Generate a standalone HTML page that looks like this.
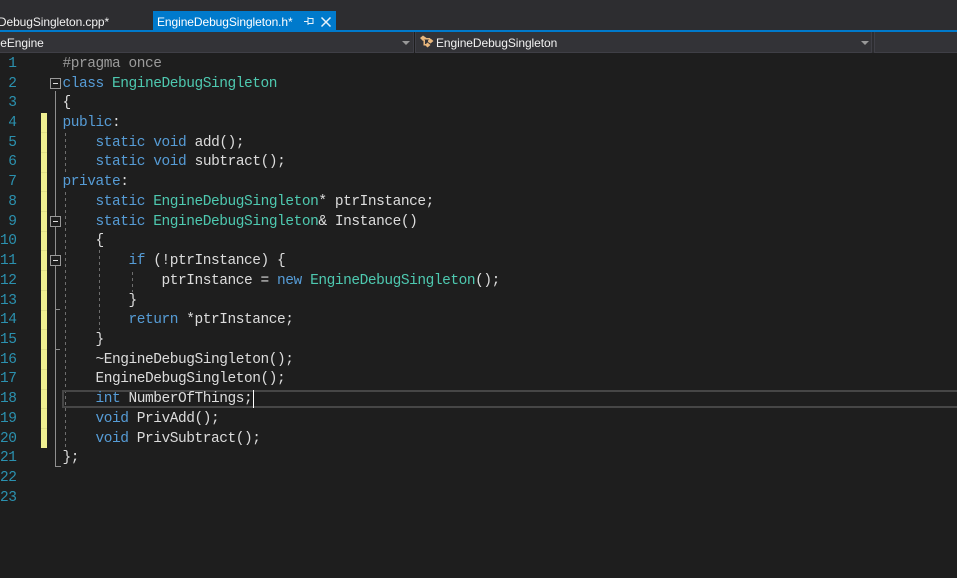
<!DOCTYPE html>
<html><head><meta charset="utf-8"><style>
html,body{margin:0;padding:0;background:#1e1e1e}
#r{position:relative;width:957px;height:578px;overflow:hidden;background:#1e1e1e}
.a{position:absolute}
.l,.n{position:absolute;white-space:pre;font-family:"Liberation Mono",monospace;font-size:14.5px;letter-spacing:-0.45px;line-height:20px;color:#dcdcdc;margin-top:1px}
.l{left:62.5px}
.n{left:0;width:16.5px;text-align:right;color:#2b91af;overflow:visible}
.k{color:#569cd6}.c{color:#4ec9b0}.p{color:#9b9b9b}
.u{position:absolute;font-family:"Liberation Sans",sans-serif;font-size:12px;letter-spacing:-0.08px;line-height:16px;white-space:nowrap;color:#f1f1f1}
.g{position:absolute;width:1px;background:repeating-linear-gradient(#6e6e6e 0 3px,transparent 3px 6px)}
.f{position:absolute;left:50px;width:9px;height:9px;border:1px solid #999;box-sizing:content-box}
.f:after{content:"";position:absolute;left:2px;top:4px;width:5px;height:1px;background:#ddd}
.s{position:absolute;left:41px;width:5.5px;height:1px;background:#dfdf87}
</style></head><body><div id="r">
<div class="a" style="left:0;top:0;width:957px;height:32px;background:#2d2d30"></div>
<div class="a" style="left:153px;top:11px;width:183px;height:19px;background:#007acc"></div>
<div class="a" style="left:0;top:30px;width:957px;height:2px;background:#007acc"></div>
<div class="u" style="left:-39px;top:14px">EngineDebugSingleton.cpp*</div>
<div class="u" style="left:157px;top:14px;color:#fff">EngineDebugSingleton.h*</div>
<svg class="a" style="left:300px;top:15px" width="36" height="14" viewBox="0 0 36 14" fill="none" stroke="#e8f3fb" stroke-width="1"><path d="M4 6.5H8M8 3.5H13V8.5H8ZM8 2V10"/><path d="M21.5 2.5L30.5 11.5M30.5 2.5L21.5 11.5" stroke-width="1.5"/></svg>

<div class="a" style="left:0;top:32px;width:414px;height:21px;background:#333337;border-right:1px solid #3f3f46;border-bottom:1px solid #3f3f46;box-sizing:border-box"></div>
<div class="a" style="left:415px;top:32px;width:457px;height:21px;background:#333337;border:1px solid #3f3f46;border-top:0;box-sizing:border-box"></div>
<div class="a" style="left:874px;top:32px;width:83px;height:21px;background:#333337;border-left:1px solid #3f3f46;border-bottom:1px solid #3f3f46;box-sizing:border-box"></div>
<div class="a" style="left:872px;top:32px;width:2px;height:21px;background:#2d2d30"></div>
<div class="u" style="left:-30px;top:35px">EngineEngine</div>
<div class="u" style="left:436px;top:35px">EngineDebugSingleton</div>
<svg class="a" style="left:402px;top:41px" width="9" height="5"><path d="M0 0H8L4 4Z" fill="#999"/></svg>
<svg class="a" style="left:861px;top:41px" width="9" height="5"><path d="M0 0H8L4 4Z" fill="#999"/></svg>
<svg class="a" style="left:419px;top:35px" width="15" height="15" viewBox="0 0 15 15" fill="#e8b67c"><path d="M1 3L4 0.5L7.500 3L4 6Z"/><path d="M5 3H11V4.500H5Z"/><path d="M9 5.500L11.500 3.500L14.500 6L11.500 8.500L9 7Z"/><path d="M6 10L8.500 7.500L11.500 10L8.500 12.500Z"/><path d="M4.500 5V10.500H7V9H6V5Z"/></svg>

<div class="a" style="left:41px;top:113px;width:5.5px;height:335px;background:#efef91"></div>
<div class="s" style="top:132px"></div><div class="s" style="top:152px"></div><div class="s" style="top:172px"></div><div class="s" style="top:191px"></div><div class="s" style="top:211px"></div><div class="s" style="top:231px"></div><div class="s" style="top:250px"></div><div class="s" style="top:270px"></div><div class="s" style="top:290px"></div><div class="s" style="top:310px"></div><div class="s" style="top:329px"></div><div class="s" style="top:349px"></div><div class="s" style="top:369px"></div><div class="s" style="top:389px"></div><div class="s" style="top:408px"></div><div class="s" style="top:428px"></div>
<div class="a" style="left:55px;top:91px;width:1px;height:375px;background:#8f8f8f"></div>
<div class="a" style="left:55px;top:466px;width:6px;height:1px;background:#8f8f8f"></div>
<div class="a" style="left:55px;top:309px;width:5px;height:1px;background:#8f8f8f"></div>
<div class="a" style="left:55px;top:349px;width:5px;height:1px;background:#8f8f8f"></div>
<div class="f" style="top:78px;background:#1e1e1e"></div>
<div class="f" style="top:216px;background:#1e1e1e"></div>
<div class="f" style="top:255px;background:#1e1e1e"></div>
<div class="g" style="left:65px;top:133px;height:39px"></div>
<div class="g" style="left:65px;top:192px;height:256px"></div>
<div class="g" style="left:99px;top:250px;height:80px"></div>
<div class="g" style="left:132px;top:272px;height:20px"></div>
<div class="a" style="left:62px;top:390px;width:895px;height:18px;border:2px solid #464646;border-right:0;box-sizing:border-box"></div>
<div class="a" style="left:253px;top:390px;width:1px;height:18px;background:#fff"></div>

<div class="n" style="top:53px">1</div><div class="l p" style="top:53px">#pragma once</div>
<div class="n" style="top:73px">2</div><div class="l" style="top:73px"><span class="k">class</span> <span class="c">EngineDebugSingleton</span></div>
<div class="n" style="top:92px">3</div><div class="l" style="top:92px">{</div>
<div class="n" style="top:112px">4</div><div class="l" style="top:112px"><span class="k">public</span>:</div>
<div class="n" style="top:132px">5</div><div class="l" style="top:132px">    <span class="k">static</span> <span class="k">void</span> add();</div>
<div class="n" style="top:151px">6</div><div class="l" style="top:151px">    <span class="k">static</span> <span class="k">void</span> subtract();</div>
<div class="n" style="top:171px">7</div><div class="l" style="top:171px"><span class="k">private</span>:</div>
<div class="n" style="top:191px">8</div><div class="l" style="top:191px">    <span class="k">static</span> <span class="c">EngineDebugSingleton</span>* ptrInstance;</div>
<div class="n" style="top:211px">9</div><div class="l" style="top:211px">    <span class="k">static</span> <span class="c">EngineDebugSingleton</span>&amp; Instance()</div>
<div class="n" style="top:230px">10</div><div class="l" style="top:230px">    {</div>
<div class="n" style="top:250px">11</div><div class="l" style="top:250px">        <span class="k">if</span> (!ptrInstance) {</div>
<div class="n" style="top:270px">12</div><div class="l" style="top:270px">            ptrInstance = <span class="k">new</span> <span class="c">EngineDebugSingleton</span>();</div>
<div class="n" style="top:290px">13</div><div class="l" style="top:290px">        }</div>
<div class="n" style="top:309px">14</div><div class="l" style="top:309px">        <span class="k">return</span> *ptrInstance;</div>
<div class="n" style="top:329px">15</div><div class="l" style="top:329px">    }</div>
<div class="n" style="top:349px">16</div><div class="l" style="top:349px">    ~EngineDebugSingleton();</div>
<div class="n" style="top:368px">17</div><div class="l" style="top:368px">    EngineDebugSingleton();</div>
<div class="n" style="top:388px">18</div><div class="l" style="top:388px">    <span class="k">int</span> NumberOfThings;</div>
<div class="n" style="top:408px">19</div><div class="l" style="top:408px">    <span class="k">void</span> PrivAdd();</div>
<div class="n" style="top:428px">20</div><div class="l" style="top:428px">    <span class="k">void</span> PrivSubtract();</div>
<div class="n" style="top:447px">21</div><div class="l" style="top:447px">};</div>
<div class="n" style="top:467px">22</div>
<div class="n" style="top:487px">23</div>
</div></body></html>
